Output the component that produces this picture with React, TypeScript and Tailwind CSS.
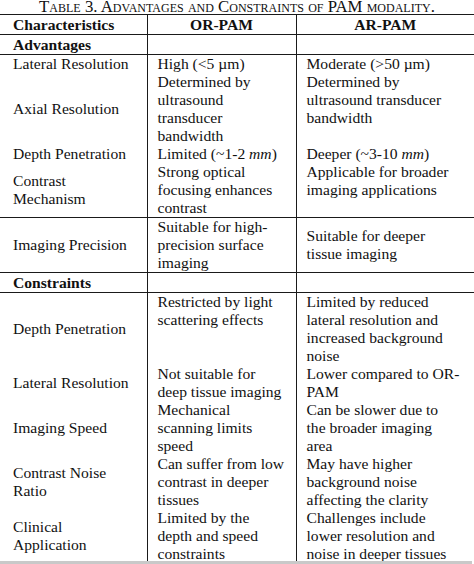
import type { ReactNode } from 'react';

type Row = {
  label: ReactNode;
  or: ReactNode;
  ar: ReactNode;
  line?: boolean;
  arMid?: boolean;
};

const ADVANTAGES: Row[] = [
  { label: 'Lateral Resolution', or: 'High (<5 µm)', ar: 'Moderate (>50 µm)' },
  {
    label: 'Axial Resolution',
    or: <>Determined by<br />ultrasound<br />transducer<br />bandwidth</>,
    ar: <>Determined by<br />ultrasound transducer<br />bandwidth</>,
  },
  {
    label: 'Depth Penetration',
    or: <>Limited (~1-2 <i>mm</i>)</>,
    ar: <>Deeper (~3-10 <i>mm</i>)</>,
  },
  {
    label: <>Contrast<br />Mechanism</>,
    or: <>Strong optical<br />focusing enhances<br />contrast</>,
    ar: <>Applicable for broader<br />imaging applications</>,
    line: true,
  },
  {
    label: 'Imaging Precision',
    or: <>Suitable for high-<br />precision surface<br />imaging</>,
    ar: <>Suitable for deeper<br />tissue imaging</>,
    line: true,
    arMid: true,
  },
];

const CONSTRAINTS: Row[] = [
  {
    label: 'Depth Penetration',
    or: <>Restricted by light<br />scattering effects</>,
    ar: <>Limited by reduced<br />lateral resolution and<br />increased background<br />noise</>,
  },
  {
    label: 'Lateral Resolution',
    or: <>Not suitable for<br />deep tissue imaging</>,
    ar: <>Lower compared to OR-<br />PAM</>,
  },
  {
    label: 'Imaging Speed',
    or: <>Mechanical<br />scanning limits<br />speed</>,
    ar: <>Can be slower due to<br />the broader imaging<br />area</>,
  },
  {
    label: <>Contrast Noise<br />Ratio</>,
    or: <>Can suffer from low<br />contrast in deeper<br />tissues</>,
    ar: <>May have higher<br />background noise<br />affecting the clarity</>,
  },
  {
    label: <>Clinical<br />Application</>,
    or: <>Limited by the<br />depth and speed<br />constraints</>,
    ar: <>Challenges include<br />lower resolution and<br />noise in deeper tissues</>,
  },
];

function BodyRow({ row }: { row: Row }) {
  const line = row.line ? 'border-b border-[#1a1a1a]' : '';
  return (
    <tr>
      <td className={`pl-[13px] align-middle whitespace-nowrap ${line}`}>{row.label}</td>
      <td className={`pl-[10px] align-top whitespace-nowrap border-l border-[#1a1a1a] ${line}`}>{row.or}</td>
      <td
        className={`pl-[10px] whitespace-nowrap border-l border-[#1a1a1a] ${row.arMid ? 'align-middle' : 'align-top'} ${line}`}
      >
        {row.ar}
      </td>
    </tr>
  );
}

function SectionRow({ title }: { title: string }) {
  return (
    <tr className="font-bold leading-[19px]">
      <td className="pl-[13px] border-b border-[#1a1a1a]">{title}</td>
      <td className="border-l border-b border-[#1a1a1a]" />
      <td className="border-l border-b border-[#1a1a1a]" />
    </tr>
  );
}

export default function App() {
  return (
    <div className="flex h-[564px] w-[474px] flex-col overflow-hidden bg-white font-['Liberation_Serif',serif] text-[#111]">
      <div className="h-[14px] shrink-0 text-center text-[16.8px] leading-[14px] [font-variant:small-caps]">
        Table 3. Advantages and Constraints of PAM modality.
      </div>
      <div className="min-h-0 flex-1 overflow-hidden">
        <table className="w-[474px] table-fixed border-collapse text-[15.6px] leading-[18px]">
          <colgroup>
            <col className="w-[147px]" />
            <col className="w-[149px]" />
            <col className="w-[178px]" />
          </colgroup>
          <thead>
            <tr className="font-bold leading-[19px]">
              <th className="pl-[13px] text-left border-t border-b border-[#1a1a1a]">Characteristics</th>
              <th className="text-center border-l border-t border-b border-[#1a1a1a]">OR-PAM</th>
              <th className="text-center border-l border-t border-b border-[#1a1a1a]">AR-PAM</th>
            </tr>
          </thead>
          <tbody>
            <SectionRow title="Advantages" />
            {ADVANTAGES.map((r, i) => (
              <BodyRow key={`a-${i}`} row={r} />
            ))}
            <SectionRow title="Constraints" />
            {CONSTRAINTS.map((r, i) => (
              <BodyRow key={`c-${i}`} row={r} />
            ))}
          </tbody>
        </table>
      </div>
      <div className="h-[3px] w-[472px] shrink-0 bg-[#c9c9c9]" />
    </div>
  );
}
